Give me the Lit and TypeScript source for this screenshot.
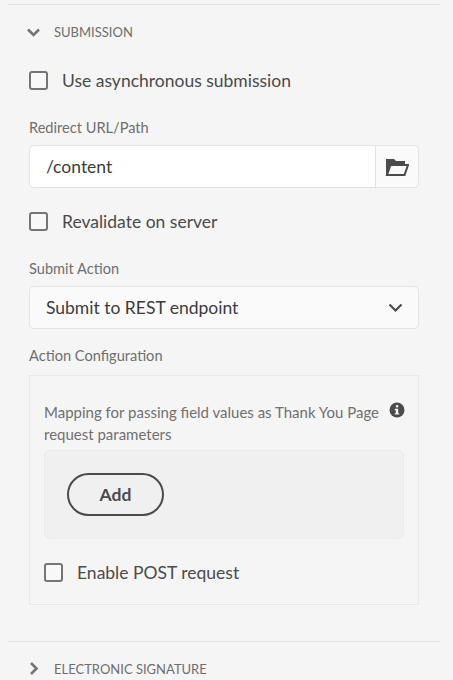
import { LitElement, html, css } from "lit";
import { customElement } from "lit/decorators.js";

@customElement("app-root")
export class AppRoot extends LitElement {
  static styles = css`
    :host {
      display: block;
      width: 453px;
      height: 680px;
      overflow: hidden;
      background: #f5f5f5;
      font-family: "Lato", "Open Sans", sans-serif;
      color: #4b4b4b;
      box-sizing: border-box;
      padding: 4px 13px 0 8px;
    }
    * { box-sizing: border-box; }
    .rule { height: 1px; background: #e1e1e1; }
    .head {
      display: flex;
      align-items: center;
      height: 54px;
      padding-left: 19px;
      font-size: 13px;
      color: #6e6e6e;
    }
    .head svg { width: 13px; height: 13px; margin-right: 14px; flex: none; }
    .head.second { height: 53px; }
    .body { padding: 0 21px; display: flex; flex-direction: column; }
    .check {
      display: flex;
      align-items: center;
      gap: 14px;
      font-size: 17.5px;
      color: #4b4b4b;
      height: 20px;
    }
    .box {
      width: 19px;
      height: 19px;
      border: 2px solid #757575;
      border-radius: 3px;
      background: #f8f8f8;
      flex: none;
    }
    .label { font-size: 14.6px; color: #707070; line-height: 20px; }
    .field {
      height: 43px;
      display: flex;
      align-items: stretch;
      background: #fff;
      border: 1px solid #e4e4e4;
      border-radius: 5px;
      font-size: 17.5px;
      color: #3c3c3c;
    }
    .value { flex: 1; display: flex; align-items: center; padding-left: 16px; }
    .browse {
      width: 43px;
      border-left: 1px solid #e1e1e1;
      background: #fafafa;
      border-radius: 0 5px 5px 0;
      display: flex;
      align-items: center;
      justify-content: center;
    }
    .browse svg { width: 24px; height: 20px; }
    .select { background: #fafafa; justify-content: space-between; align-items: center; padding-right: 15px; }
    .select .value { height: 100%; }
    .select svg { width: 15px; height: 15px; }
    .group {
      height: 230px;
      border: 1px solid #e8e8e8;
      padding: 26px 14px 0 14px;
      display: flex;
      flex-direction: column;
    }
    .desc { display: flex; justify-content: space-between; align-items: flex-start; }
    .desc p { margin: 0; width: 340px; font-size: 15px; line-height: 21.5px; color: #707070; }
    .desc svg { width: 16px; height: 16px; flex: none; margin-right: -1px; }
    .mapping {
      height: 89px;
      margin-top: 5px;
      background: #f0f0f0;
      border: 1px solid #ebebeb;
      border-radius: 5px;
      padding: 22px;
    }
    .add {
      display: flex;
      align-items: center;
      justify-content: center;
      width: 97px;
      height: 43px;
      border: 2px solid #4b4b4b;
      border-radius: 22px;
      background: transparent;
      font: 700 17.5px "Lato", "Open Sans", sans-serif;
      color: #4b4b4b;
      padding: 0;
    }
    .gap-async { margin-top: 11px; }
    .gap-redirect { margin-top: 28px; }
    .gap-field { margin-top: 7px; }
    .gap-revalidate { margin-top: 23px; }
    .gap-action { margin-top: 28px; }
    .gap-config { margin-top: 17px; }
    .gap-group { margin-top: 9px; }
    .gap-post { margin-top: 23px; }
    .gap-rule { margin-top: 36px; }
  `;

  private cb(text: string) {
    return html`<div class="check"><span class="box"></span><span>${text}</span></div>`;
  }

  render() {
    return html`
      <div class="rule"></div>
      <div class="head">
        <svg viewBox="0 0 13 13"><path d="M1 3.5 L6.5 9 L12 3.5" fill="none" stroke="#757575" stroke-width="2.6"/></svg>
        <span>SUBMISSION</span>
      </div>
      <div class="body">
        <div class="gap-async">${this.cb("Use asynchronous submission")}</div>
        <div class="label gap-redirect">Redirect URL/Path</div>
        <div class="field gap-field">
          <div class="value">/content</div>
          <div class="browse">
            <svg viewBox="0 0 24 20">
              <path d="M1 2 H9 L11 4 H20 V7 H6 L3 15 V18 H1 Z" fill="#4b4b4b"/>
              <path d="M5.5 8 H23 L19.5 18 H2 Z" fill="none" stroke="#4b4b4b" stroke-width="2"/>
            </svg>
          </div>
        </div>
        <div class="gap-revalidate">${this.cb("Revalidate on server")}</div>
        <div class="label gap-action">Submit Action</div>
        <div class="field select gap-field">
          <div class="value">Submit to REST endpoint</div>
          <svg viewBox="0 0 15 15"><path d="M1.5 4.5 L7.5 10.5 L13.5 4.5" fill="none" stroke="#4b4b4b" stroke-width="2.2"/></svg>
        </div>
        <div class="label gap-config">Action Configuration</div>
        <div class="group gap-group">
          <div class="desc">
            <p>Mapping for passing field values as Thank You Page request parameters</p>
            <svg viewBox="0 0 16 16">
              <circle cx="8" cy="8" r="7.5" fill="#4b4b4b"/>
              <rect x="6.8" y="3" width="2.6" height="2.6" rx="1" fill="#f5f5f5"/>
              <path d="M5.8 6.8 H9.2 V11.2 H10.2 V12.6 H5.8 V11.2 H6.8 V8.2 H5.8 Z" fill="#f5f5f5"/>
            </svg>
          </div>
          <div class="mapping"><button class="add">Add</button></div>
          <div class="gap-post">${this.cb("Enable POST request")}</div>
        </div>
      </div>
      <div class="rule gap-rule"></div>
      <div class="head second">
        <svg viewBox="0 0 13 13"><path d="M4 1 L9.5 6.5 L4 12" fill="none" stroke="#757575" stroke-width="2.6"/></svg>
        <span>ELECTRONIC SIGNATURE</span>
      </div>
    `;
  }
}
